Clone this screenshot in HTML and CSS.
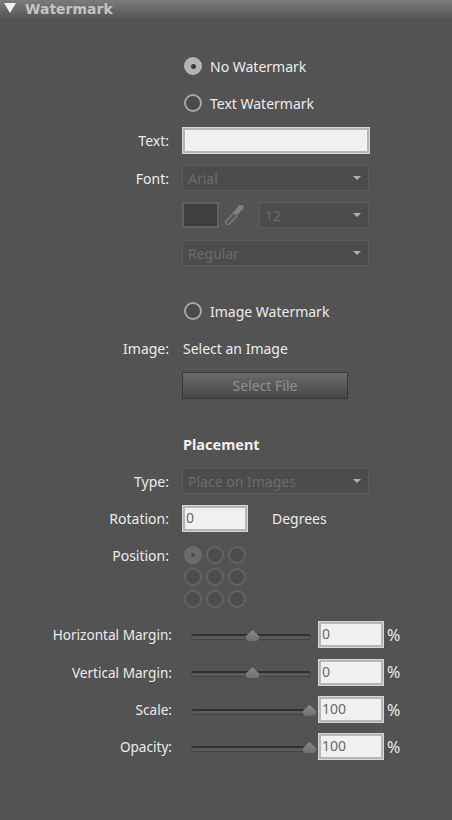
FILE: index.html
```html
<!DOCTYPE html>
<html>
<head>
	<title>Watermark</title>
	<link rel="stylesheet" href="styles.css">
</head>
<body>
	<div class="head"><span class="arrow"></span><span class="title">Watermark</span></div>
	<div class="form">
		<div class="row">
			<div class="label"></div>
			<div class="radio-item"><span class="radio checked"><span class="dot"></span></span>No Watermark</div>
		</div>
		<div class="row">
			<div class="label"></div>
			<div class="radio-item"><span class="radio"></span>Text Watermark</div>
		</div>
		<div class="row">
			<div class="label">Text:</div>
			<div class="input wide"></div>
		</div>
		<div class="row">
			<div class="label">Font:</div>
			<div class="select wide">Arial<span class="caret"></span></div>
		</div>
		<div class="row">
			<div class="label"></div>
			<div class="swatch"></div>
			<svg class="dropper" width="22" height="24" viewBox="0 0 22 24">
				<path d="M3 21 L2.5 18.5 L11 10 L14 13 L5.5 21.5 Z" fill="#565656" stroke="#7a7a7a" stroke-width="1.4"/>
				<path d="M10 9 L12 7 L14 5 L16 2.5 Q18 1 20 2.5 Q21.5 4.5 19.5 6.5 L17.5 8.5 L15.5 11 L14.5 12 Z" fill="#808080"/>
			</svg>
			<div class="select size">12<span class="caret"></span></div>
		</div>
		<div class="row">
			<div class="label"></div>
			<div class="select wide">Regular<span class="caret"></span></div>
		</div>

		<div class="row group">
			<div class="label"></div>
			<div class="radio-item"><span class="radio"></span>Image Watermark</div>
		</div>
		<div class="row">
			<div class="label">Image:</div>
			<div class="value">Select an Image</div>
		</div>
		<div class="row">
			<div class="label"></div>
			<div class="button">Select File</div>
		</div>

		<div class="row group">
			<div class="label"></div>
			<div class="value heading">Placement</div>
		</div>
		<div class="row">
			<div class="label">Type:</div>
			<div class="select wide">Place on Images<span class="caret"></span></div>
		</div>
		<div class="row">
			<div class="label">Rotation:</div>
			<div class="input short">0</div>
			<div class="unit">Degrees</div>
		</div>
		<div class="row position">
			<div class="label">Position:</div>
			<div class="grid">
				<span class="cell on"><span class="dot"></span></span><span class="cell"></span><span class="cell"></span>
				<span class="cell"></span><span class="cell"></span><span class="cell"></span>
				<span class="cell"></span><span class="cell"></span><span class="cell"></span>
			</div>
		</div>

		<div class="row slider-row">
			<div class="label">Horizontal Margin:</div>
			<div class="track"><span class="thumb mid"></span></div>
			<div class="input short">0</div>
			<div class="pct">%</div>
		</div>
		<div class="row slider-row">
			<div class="label">Vertical Margin:</div>
			<div class="track"><span class="thumb mid"></span></div>
			<div class="input short">0</div>
			<div class="pct">%</div>
		</div>
		<div class="row slider-row">
			<div class="label">Scale:</div>
			<div class="track"><span class="thumb end"></span></div>
			<div class="input short">100</div>
			<div class="pct">%</div>
		</div>
		<div class="row slider-row">
			<div class="label">Opacity:</div>
			<div class="track"><span class="thumb end"></span></div>
			<div class="input short">100</div>
			<div class="pct">%</div>
		</div>
	</div>
</body>
</html>
```

FILE: styles.css
```css
html, body {
	margin: 0;
	height: 820px;
	overflow: hidden;
}
body {
	background: #535353;
	color: #ececec;
	font-family: "Noto Sans", sans-serif;
	font-size: 14px;
}

.head {
	height: 20px;
	display: flex;
	align-items: center;
	background: linear-gradient(#7b7b7b, #535353);
}
.arrow {
	width: 0;
	height: 0;
	margin: -5px 0 0 4px;
	border-left: 6px solid transparent;
	border-right: 6px solid transparent;
	border-top: 10px solid #f2f2f2;
}
.title {
	margin: -3px 0 0 9px;
	font-family: "DejaVu Sans", sans-serif;
	font-weight: bold;
	font-size: 14px;
	color: #c4c4c4;
}

.form {
	padding-top: 27.4px;
}
.row {
	display: flex;
	align-items: center;
	height: 37.33px;
}
.row.group {
	margin-top: 21px;
}
.label {
	width: 169px;
	flex: none;
	margin-right: 13px;
	text-align: right;
}

.radio-item {
	display: flex;
	align-items: center;
	margin-left: 2px;
	font-size: 14px;
}
.radio {
	width: 14px;
	height: 14px;
	margin-right: 8px;
	border: 2px solid #a6a6a6;
	border-radius: 50%;
	background: #4a4a4a;
	display: flex;
	align-items: center;
	justify-content: center;
}
.radio.checked {
	background: #b4b4b4;
	border-color: #b4b4b4;
}
.radio .dot {
	width: 5px;
	height: 5px;
	border-radius: 50%;
	background: #3c3c3c;
}

.input {
	box-sizing: border-box;
	height: 27px;
	padding-left: 3px;
	line-height: 23px;
	font-size: 14px;
	color: #6a6a6a;
	background: #f0f0f0;
	border: 1px solid #d6d6d6;
	box-shadow: inset 0 0 0 2px #b6b6b6;
}
.input.wide {
	width: 188px;
}
.input.short {
	width: 66px;
}

.select {
	box-sizing: border-box;
	height: 26px;
	padding-left: 5px;
	line-height: 25px;
	position: relative;
	color: #6b6b6b;
	background: #4c4c4c;
	border: 1px solid #5c5c5c;
}
.select.wide {
	width: 187px;
}
.select.size {
	width: 110px;
}
.caret {
	position: absolute;
	right: 7px;
	top: 10px;
	width: 0;
	height: 0;
	border-left: 4px solid transparent;
	border-right: 4px solid transparent;
	border-top: 4px solid #b0b0b0;
}

.swatch {
	box-sizing: border-box;
	width: 37px;
	height: 26px;
	background: #3f3f3f;
	border: 2px solid #606060;
}
.dropper {
	margin: 0 14px 0 4px;
}

.value {
	margin-left: 1px;
}
.heading {
	font-weight: bold;
	font-size: 14.5px;
	color: #f0f0f0;
}
.button {
	box-sizing: border-box;
	width: 166px;
	height: 27px;
	line-height: 25px;
	text-align: center;
	color: #909090;
	background: linear-gradient(#6a6a6a, #484848);
	border: 1px solid #383838;
}
.unit {
	margin-left: 24px;
}

.row.position {
	height: 79px;
	align-items: flex-start;
}
.position .label {
	margin-top: 9px;
}
.grid {
	display: grid;
	grid-template-columns: repeat(3, 18px);
	grid-auto-rows: 18px;
	gap: 4px;
	margin: 9px 0 0 2px;
}
.cell {
	box-sizing: border-box;
	border: 2px solid #636363;
	border-radius: 50%;
	background: #4c4c4c;
	display: flex;
	align-items: center;
	justify-content: center;
}
.cell.on {
	background: #6c6c6c;
	border-color: #6c6c6c;
}
.cell .dot {
	width: 4px;
	height: 4px;
	border-radius: 50%;
	background: #4c4c4c;
}

.slider-row .label {
	width: 172px;
	margin-right: 19px;
	font-size: 13.6px;
}
.track {
	box-sizing: border-box;
	width: 120px;
	height: 6px;
	margin: 4px 7px 0 0;
	position: relative;
	background: #5a5a5a;
	border: 1px solid #444;
	border-top: 2px solid #303030;
	border-radius: 3px;
}
.thumb {
	position: absolute;
	top: -6px;
	width: 13px;
	height: 11px;
	background: linear-gradient(#8a8a8a, #707070);
	clip-path: polygon(50% 0, 100% 55%, 100% 85%, 80% 100%, 20% 100%, 0 85%, 0 55%);
}
.thumb.mid {
	left: 54px;
}
.thumb.end {
	left: 111px;
}
.pct {
	margin-left: 3px;
	font-size: 16px;
}
```
